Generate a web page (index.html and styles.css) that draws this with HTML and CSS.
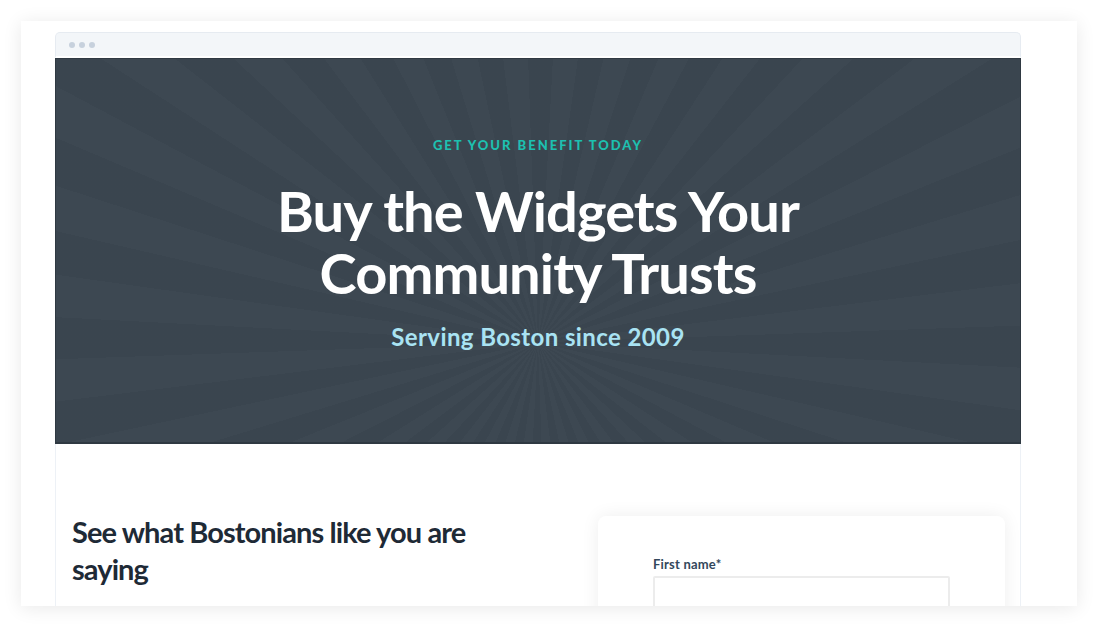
FILE: index.html
```html
<!DOCTYPE html>
<html lang="en">
<head>
<meta charset="utf-8">
<title>Landing page preview</title>
<link rel="stylesheet" href="styles.css">
</head>
<body>
<div class="sheet">
  <div class="frame">
    <div class="topbar">
      <span class="dot"></span><span class="dot"></span><span class="dot"></span>
    </div>
    <section class="hero">
      <p class="eyebrow">GET YOUR BENEFIT TODAY</p>
      <h1 class="title">Buy the Widgets Your<br>Community Trusts</h1>
      <p class="subtitle">Serving Boston since 2009</p>
    </section>
    <section class="content">
      <div class="left">
        <h2 class="heading">See what Bostonians like you are saying</h2>
      </div>
      <div class="form-card">
        <label class="label" for="fn">First name*</label>
        <div class="input" id="fn"></div>
      </div>
    </section>
  </div>
</div>
</body>
</html>
```
FILE: styles.css
```css
* { box-sizing: border-box; }
html, body { margin: 0; padding: 0; }
body {
  background: #ffffff;
  width: 1099px;
  height: 628px;
  overflow: hidden;
  padding: 21px 22px 0 21px;
  font-family: Lato, "Open Sans", sans-serif;
}
.sheet {
  width: 1056px;
  height: 585px;
  background: #ffffff;
  box-shadow: 0 2px 18px rgba(0, 0, 0, 0.09);
  padding: 11px 0 0 34px;
  overflow: hidden;
}
.frame {
  width: 966px;
  height: 600px;
  display: flex;
  flex-direction: column;
}
.topbar {
  height: 26px;
  flex: none;
  background: #f3f6f9;
  border: 1px solid #e6ebf1;
  border-bottom: 2px solid #ffffff;
  border-radius: 5px 5px 0 0;
  display: flex;
  align-items: center;
  gap: 4px;
  padding-left: 13px;
}
.dot {
  width: 6px;
  height: 6px;
  border-radius: 50%;
  background: #c7d1dd;
}
.hero {
  height: 386px;
  flex: none;
  background:
    repeating-conic-gradient(from 3deg at 50% 74%, rgba(255,255,255,0.013) 0deg 5deg, rgba(0,0,0,0.016) 5deg 10deg),
    #3b4650;
  border: 1px solid #2f3942;
  border-bottom-width: 2px;
  text-align: center;
  padding-top: 77px;
}
.eyebrow {
  margin: 0;
  color: #1dc0b0;
  font-weight: 900;
  font-size: 13px;
  letter-spacing: 2px;
  line-height: 18px;
}
.title {
  margin: 26px 0 0;
  color: #ffffff;
  font-weight: 700;
  font-size: 56px;
  line-height: 62px;
  letter-spacing: -0.9px;
}
.subtitle {
  margin: 18px 0 0;
  color: #a9e3f3;
  font-weight: 700;
  font-size: 24px;
  line-height: 30px;
  letter-spacing: 0.4px;
}
.content {
  flex: 1;
  border-left: 1px solid #edf1f6;
  border-right: 1px solid #edf1f6;
  display: flex;
  justify-content: space-between;
  padding: 69px 15px 0 16px;
}
.left { width: 440px; }
.heading {
  margin: 0;
  color: #1e2a36;
  font-weight: 700;
  font-size: 29px;
  line-height: 37px;
  letter-spacing: -0.9px;
}
.form-card {
  width: 407px;
  height: 200px;
  margin-top: 3px;
  background: #ffffff;
  border-radius: 8px;
  box-shadow: 0 0 18px rgba(0, 0, 0, 0.07);
  padding: 40px 55px 0 55px;
}
.label {
  display: block;
  color: #33475b;
  font-weight: 700;
  font-size: 13px;
  line-height: 16px;
  margin-bottom: 4px;
  letter-spacing: 0.2px;
}
.input {
  height: 40px;
  border: 2px solid #ececec;
  border-radius: 2px;
  background: #ffffff;
}
```
